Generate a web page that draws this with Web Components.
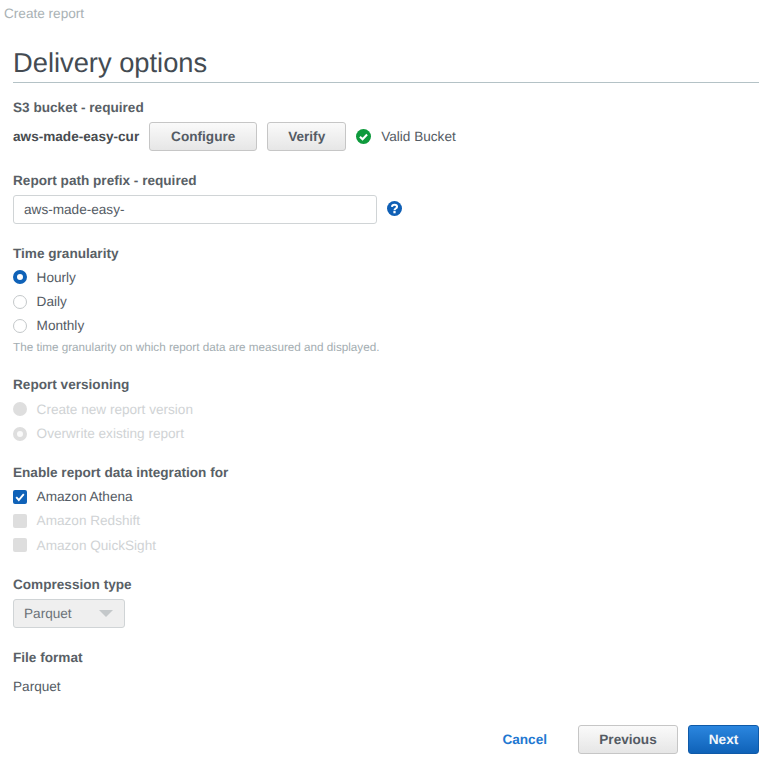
<!DOCTYPE html>
<html>
<head>
<meta charset="utf-8">
<title>Create report</title>
<style>
  html, body { margin: 0; padding: 0; background: #fff; }
  body { font-family: "Liberation Sans", Arial, sans-serif; font-size: 13.6px; color: #545b64; text-rendering: geometricPrecision; }
</style>
</head>
<body>
<report-page>
  <span slot="crumb">Create report</span>
  <span slot="title">Delivery options</span>

  <form-field label="S3 bucket - required" style="--gap-top:0px;--label-gap:3px">
    <div style="display:flex;align-items:center;height:30px">
      <b style="color:#484c50;margin-right:10px">aws-made-easy-cur</b>
      <aws-button style="width:108px;margin-right:10px">Configure</aws-button>
      <aws-button style="width:79px;margin-right:10px">Verify</aws-button>
      <status-ok>Valid Bucket</status-ok>
    </div>
  </form-field>

  <form-field label="Report path prefix - required" style="--gap-top:20px;--label-gap:4px">
    <div style="display:flex;align-items:center">
      <text-box style="width:364px">aws-made-easy-</text-box>
      <help-icon></help-icon>
    </div>
  </form-field>

  <form-field label="Time granularity" style="--gap-top:20px;--label-gap:1px">
    <aws-radio checked>Hourly</aws-radio>
    <aws-radio>Daily</aws-radio>
    <aws-radio>Monthly</aws-radio>
    <div style="font-size:11.7px;line-height:18px;margin-top:1px;color:#a3adb1">The time granularity on which report data are measured and displayed.</div>
  </form-field>

  <form-field label="Report versioning" style="--gap-top:18px;--label-gap:2px">
    <aws-radio disabled>Create new report version</aws-radio>
    <aws-radio disabled checked>Overwrite existing report</aws-radio>
  </form-field>

  <form-field label="Enable report data integration for" style="--gap-top:17.4px;--label-gap:1px">
    <aws-check checked>Amazon Athena</aws-check>
    <aws-check disabled>Amazon Redshift</aws-check>
    <aws-check disabled>Amazon QuickSight</aws-check>
  </form-field>

  <form-field label="Compression type" style="--gap-top:17.6px;--label-gap:4px">
    <select-box style="width:112px">Parquet</select-box>
  </form-field>

  <form-field label="File format" style="--gap-top:19.6px;--label-gap:9px">
    <div style="line-height:20px">Parquet</div>
  </form-field>

  <div slot="footer" style="display:flex;justify-content:flex-end;align-items:center">
    <a style="font-weight:bold;color:#1f78d1;margin-right:31px">Cancel</a>
    <aws-button style="width:100px;margin-right:10px">Previous</aws-button>
    <aws-button primary style="width:71px">Next</aws-button>
  </div>
</report-page>

<script>
class ReportPage extends HTMLElement {
  connectedCallback() {
    this.attachShadow({ mode: 'open' });
    this.shadowRoot.innerHTML = `
      <style>
        :host { display: block; height: 770px; box-sizing: border-box; overflow: hidden; }
        .crumb { padding-left: 4px; height: 28px; line-height: 28px; color: #aab2b5; }
        .body { padding: 0 9px 0 13px; }
        h1 {
          margin: 16px 0 15px;
          font-size: 27.3px; font-weight: normal; line-height: 37px; height: 38px;
          color: #444b52; border-bottom: 1px solid #b4c2c6;
        }
        .footer { margin-top: 28px; }
      </style>
      <div class="crumb"><slot name="crumb"></slot></div>
      <div class="body">
        <h1><slot name="title"></slot></h1>
        <slot></slot>
        <div class="footer"><slot name="footer"></slot></div>
      </div>`;
  }
}

class FormField extends HTMLElement {
  connectedCallback() {
    this.attachShadow({ mode: 'open' });
    this.shadowRoot.innerHTML = `
      <style>
        :host { display: block; margin-top: var(--gap-top, 0); }
        .label { font-weight: bold; line-height: 20px; color: #595f66; margin-bottom: var(--label-gap, 5px); }
      </style>
      <div class="label">${this.getAttribute('label') || ''}</div>
      <slot></slot>`;
  }
}

class AwsButton extends HTMLElement {
  connectedCallback() {
    this.attachShadow({ mode: 'open' });
    this.shadowRoot.innerHTML = `
      <style>
        :host { display: block; box-sizing: border-box; height: 29px; }
        div {
          box-sizing: border-box; height: 100%;
          display: flex; align-items: center; justify-content: center;
          font-weight: bold; border-radius: 3px;
          color: #545b64; border: 1px solid #c6c6c6;
          background: linear-gradient(#fafafa, #e6e6e6);
        }
        :host([primary]) div {
          color: #f2f6fa; border-color: #0f5aa8;
          background: linear-gradient(#2b86df, #0f62b8);
        }
      </style>
      <div><slot></slot></div>`;
  }
}

class StatusOk extends HTMLElement {
  connectedCallback() {
    this.attachShadow({ mode: 'open' });
    this.shadowRoot.innerHTML = `
      <style>
        :host { display: flex; align-items: center; color: #545b64; }
        svg { width: 15px; height: 15px; margin-right: 10px; }
      </style>
      <svg viewBox="0 0 16 16"><circle cx="8" cy="8" r="8" fill="#0e9a3c"/><path d="M4.2 8.2 7 11l4.8-5.2" fill="none" stroke="#fff" stroke-width="2.2"/></svg>
      <slot></slot>`;
  }
}

class TextBox extends HTMLElement {
  connectedCallback() {
    this.attachShadow({ mode: 'open' });
    this.shadowRoot.innerHTML = `
      <style>
        :host {
          display: block; box-sizing: border-box; height: 29px; line-height: 27px;
          padding-left: 10px; background: #fff; color: #545b64;
          border: 1px solid #d0d4d6; border-radius: 3px;
        }
      </style>
      <slot></slot>`;
  }
}

class HelpIcon extends HTMLElement {
  connectedCallback() {
    this.attachShadow({ mode: 'open' });
    this.shadowRoot.innerHTML = `
      <style>
        :host { display: block; width: 15px; height: 15px; margin: -2px 0 0 10px; }
        svg { display: block; width: 15px; height: 15px; }
      </style>
      <svg viewBox="0 0 16 16"><circle cx="8" cy="8" r="8" fill="#0f5fb5"/><path d="M5.3 6.2C5.4 4.7 6.5 3.9 8 3.9c1.6 0 2.7.9 2.7 2.2 0 1.9-2.7 1.9-2.7 3.7" fill="none" stroke="#fff" stroke-width="2.2"/><rect x="6.8" y="10.7" width="2.4" height="2.4" fill="#fff"/></svg>`;
  }
}

class AwsRadio extends HTMLElement {
  connectedCallback() {
    this.attachShadow({ mode: 'open' });
    this.shadowRoot.innerHTML = `
      <style>
        :host { display: flex; align-items: center; height: 24.4px; color: #545b64; }
        :host([disabled]) { color: #d0d3d5; }
        i {
          box-sizing: border-box; width: 14px; height: 14px; margin-right: 9.6px;
          border-radius: 50%; background: #fff; border: 1px solid #c4c8ca;
        }
        :host([checked]) i { border: 4px solid #0f62b8; }
        :host([disabled]) i { border: none; background: #dedede; }
        :host([disabled][checked]) i { border: 4px solid #dedede; background: #fafafa; }
      </style>
      <i></i><slot></slot>`;
  }
}

class AwsCheck extends HTMLElement {
  connectedCallback() {
    this.attachShadow({ mode: 'open' });
    this.shadowRoot.innerHTML = `
      <style>
        :host { display: flex; align-items: center; height: 24.4px; color: #545b64; }
        :host([disabled]) { color: #d0d3d5; }
        span {
          box-sizing: border-box; width: 14px; height: 14px; margin-right: 9.6px;
          border-radius: 2px; background: #dedede; display: block;
        }
        :host([checked]) span { background: #0f62b8; }
        svg { display: none; width: 14px; height: 14px; }
        :host([checked]) svg { display: block; }
      </style>
      <span><svg viewBox="0 0 14 14"><path d="M3.2 7.2 5.8 10l5-5.8" fill="none" stroke="#fff" stroke-width="1.9"/></svg></span>
      <slot></slot>`;
  }
}

class SelectBox extends HTMLElement {
  connectedCallback() {
    this.attachShadow({ mode: 'open' });
    this.shadowRoot.innerHTML = `
      <style>
        :host {
          display: flex; align-items: center; justify-content: space-between;
          box-sizing: border-box; height: 29px; padding: 0 11px 0 10px;
          background: #efefef; color: #6b7278;
          border: 1px solid #d0d4d6; border-radius: 3px;
        }
        i { width: 0; height: 0; border: 7px solid transparent; border-bottom: 0; border-top: 7px solid #c4c8ca; }
      </style>
      <slot></slot><i></i>`;
  }
}

customElements.define('report-page', ReportPage);
customElements.define('form-field', FormField);
customElements.define('aws-button', AwsButton);
customElements.define('status-ok', StatusOk);
customElements.define('text-box', TextBox);
customElements.define('help-icon', HelpIcon);
customElements.define('aws-radio', AwsRadio);
customElements.define('aws-check', AwsCheck);
customElements.define('select-box', SelectBox);
</script>
</body>
</html>
